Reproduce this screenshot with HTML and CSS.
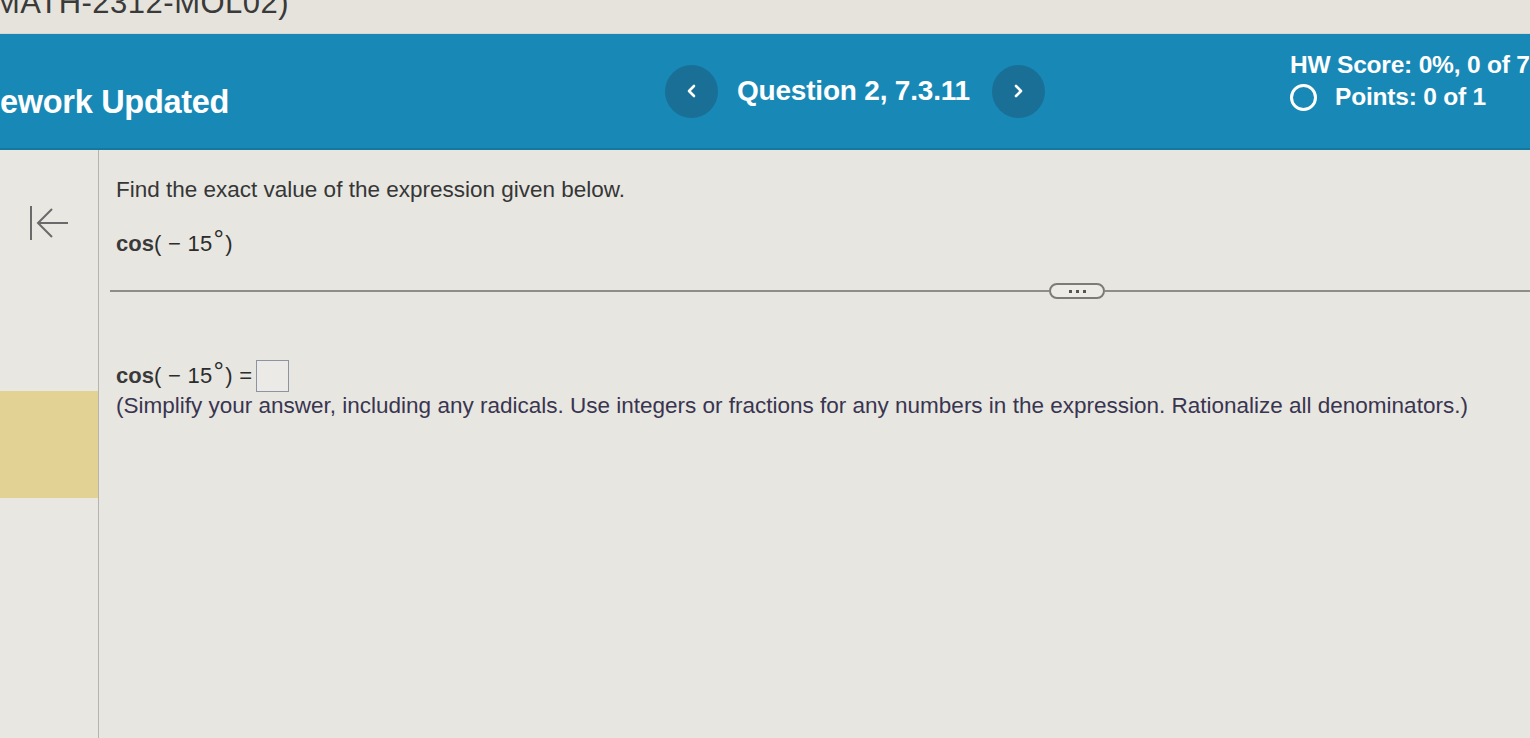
FILE: index.html
```html
<!DOCTYPE html>
<html lang="en">
<head>
<meta charset="utf-8">
<title>Question 2, 7.3.11</title>
<link rel="stylesheet" href="styles.css">
</head>
<body>
<div class="topstrip"><span class="course">MATH-2312-MOL02)</span></div>
<header class="hw-header">
  <div class="hw-title">ework Updated</div>
  <nav class="q-nav">
    <button class="nav-btn" aria-label="Previous question">
      <svg width="12" height="14" viewBox="0 0 12 14"><polyline points="8,2 3,7 8,12" fill="none" stroke="#fff" stroke-width="2.6" stroke-linecap="round" stroke-linejoin="round"/></svg>
    </button>
    <span class="q-label">Question 2, 7.3.11</span>
    <button class="nav-btn" aria-label="Next question">
      <svg width="12" height="14" viewBox="0 0 12 14"><polyline points="4,2 9,7 4,12" fill="none" stroke="#fff" stroke-width="2.6" stroke-linecap="round" stroke-linejoin="round"/></svg>
    </button>
  </nav>
  <div class="score">
    <div class="score-line">HW Score: 0%, 0 of 7</div>
    <div class="score-line points"><span class="ring"></span>Points: 0 of 1</div>
  </div>
</header>
<div class="workspace">
  <aside class="sidebar">
    <svg class="collapse-icon" width="42" height="38" viewBox="0 0 42 38">
      <line x1="3" y1="2" x2="3" y2="36" stroke="#6a6a6a" stroke-width="2"/>
      <line x1="10" y1="19" x2="40" y2="19" stroke="#6a6a6a" stroke-width="2"/>
      <polyline points="24,5 10,19 24,33" fill="none" stroke="#6a6a6a" stroke-width="2"/>
    </svg>
    <div class="flag"></div>
  </aside>
  <main class="question">
    <p class="prompt">Find the exact value of the expression given below.</p>
    <p class="expr"><span class="fn">cos</span>( − 15<sup>°</sup>)</p>
    <div class="divider">
      <span class="rule"></span>
      <button class="more" aria-label="More"><i></i><i></i><i></i></button>
      <span class="rule"></span>
    </div>
    <div class="answer-row">
      <span class="expr-inline"><span class="fn">cos</span>( − 15<sup>°</sup>) =</span>
      <span class="answer-box"></span>
    </div>
    <p class="instruction">(Simplify your answer, including any radicals. Use integers or fractions for any numbers in the expression. Rationalize all denominators.)</p>
  </main>
</div>
</body>
</html>
```
FILE: styles.css
```css
* { box-sizing: border-box; }
html, body {
  margin: 0;
  padding: 0;
  width: 1530px;
  height: 738px;
  overflow: hidden;
  background: #e7e6e1;
  font-family: "Liberation Sans", Arial, sans-serif;
}

.topstrip {
  height: 34px;
  background: #e6e3dc;
  overflow: hidden;
  border-bottom: 1px solid #d9d6cf;
}
.course {
  display: block;
  margin: -13px 0 0 -6px;
  font-size: 31px;
  line-height: 31px;
  color: #3a3a3a;
  letter-spacing: 0.5px;
}

.hw-header {
  height: 116px;
  background: #1889b7;
  display: grid;
  grid-template-columns: 665px 625px 1fr;
  align-items: center;
  color: #fff;
  border-bottom: 2px solid #15799f;
}
.hw-title {
  font-size: 32.5px;
  font-weight: bold;
  padding-top: 22px;
  white-space: nowrap;
  letter-spacing: -0.3px;
}
.q-nav {
  display: flex;
  align-items: center;
}
.nav-btn {
  width: 53px;
  height: 53px;
  border-radius: 50%;
  border: none;
  background: #1a6f97;
  display: flex;
  align-items: center;
  justify-content: center;
  padding: 0;
}
.q-label {
  font-size: 28px;
  font-weight: bold;
  margin: 0 22px 0 19px;
  white-space: nowrap;
  letter-spacing: -0.2px;
}
.score {
  align-self: start;
  padding-top: 16px;
  white-space: nowrap;
}
.score-line {
  font-size: 24.5px;
  font-weight: bold;
  line-height: 30px;
  letter-spacing: -0.2px;
}
.score-line.points {
  display: flex;
  align-items: center;
  margin-top: 2px;
}
.ring {
  width: 27px;
  height: 27px;
  border: 3px solid #fff;
  border-radius: 50%;
  margin-right: 18px;
}

.workspace {
  display: flex;
  height: 588px;
}
.sidebar {
  width: 99px;
  flex: none;
  border-right: 1px solid #b5b4ae;
  background: #e8e7e2;
  display: flex;
  flex-direction: column;
}
.collapse-icon {
  margin: 54px 0 0 28px;
}
.flag {
  margin-top: 149px;
  height: 107px;
  background: #e2d293;
}

.question {
  flex: 1;
  padding: 27px 0 0 17px;
  color: #363636;
}
.prompt {
  margin: 0;
  font-size: 22.5px;
  line-height: 26px;
  color: #363636;
}
.expr, .expr-inline {
  font-size: 22px;
  line-height: 26px;
  color: #2c2c2c;
  letter-spacing: 0.3px;
}
.fn {
  font-weight: bold;
  letter-spacing: 0;
  color: #3a3a3a;
}
.expr {
  margin: 28px 0 0 0;
}
sup {
  font-size: 26px;
  vertical-align: 3px;
  line-height: 0;
  margin: 0 1px 0 1px;
}
.divider {
  margin: 26px 0 0 -6px;
  display: grid;
  grid-template-columns: 939px 56px 1fr;
  align-items: center;
  height: 16px;
}
.rule {
  height: 2px;
  background: #8e8d88;
}
.more {
  height: 16px;
  width: 56px;
  border: 2px solid #7b7b78;
  border-radius: 8px;
  background: #ecebe6;
  display: flex;
  align-items: center;
  justify-content: center;
  gap: 4px;
  padding: 0;
}
.more i {
  width: 3px;
  height: 3px;
  background: #555;
  display: block;
}
.answer-row {
  margin-top: 60px;
  display: flex;
  align-items: center;
  height: 34px;
}
.answer-box {
  width: 33px;
  height: 32px;
  border: 1.5px solid #8d93a0;
  background: #eceae6;
  margin-left: 4px;
}
.instruction {
  margin: 0;
  font-size: 22.5px;
  line-height: 26px;
  color: #393550;
  white-space: nowrap;
}
```
